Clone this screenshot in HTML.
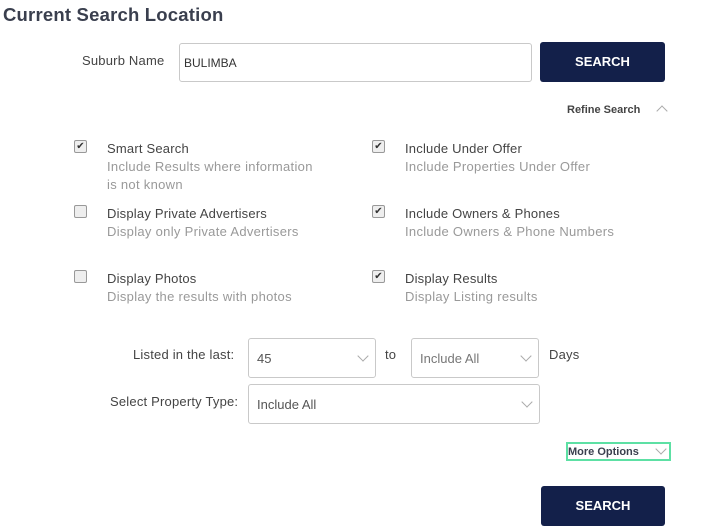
<!DOCTYPE html>
<html><head><style>
body{margin:0;width:702px;height:532px;background:#fff;font-family:"Liberation Sans",sans-serif;position:relative;overflow:hidden;color:#444}
.a{position:absolute;white-space:nowrap}
h1{position:absolute;left:3px;top:4px;margin:0;font-size:18.5px;font-weight:bold;color:#3a3f4e;letter-spacing:0.2px}
.btn{position:absolute;background:#13204a;color:#fff;font-weight:bold;font-size:13px;text-align:center;border-radius:3px}
.box{position:absolute;border:1px solid #c9c9c9;border-radius:3px;background:#fff;font-size:13px;color:#555}
.t{font-size:13px;color:#444;letter-spacing:0.2px}
.s{font-size:13px;color:#999;letter-spacing:0.3px}
.cb{position:absolute;width:11px;height:11px;border:1px solid #999;border-radius:2px;background:#eee;font-size:10px;line-height:11px;text-align:center;color:#333}
.chev{position:absolute;width:7px;height:7px;border-right:1px solid #aaa;border-bottom:1px solid #aaa;transform:rotate(45deg)}
</style></head><body>
<h1>Current Search Location</h1>
<div class="a t" style="left:82px;top:53px">Suburb Name</div>
<div class="box" style="left:179px;top:43px;width:351px;height:37px;"><span class="a" style="left:4px;top:12px;font-size:12px;color:#333">BULIMBA</span></div>
<div class="btn" style="left:540px;top:42px;width:125px;height:40px;line-height:40px">SEARCH</div>
<div class="a" style="left:567px;top:104px;font-size:11px;font-weight:bold;color:#444">Refine Search</div>
<div class="chev" style="left:658px;top:107px;transform:rotate(225deg)"></div>

<div class="cb" style="left:74px;top:140px">✔</div>
<div class="a t" style="left:107px;top:141px">Smart Search</div>
<div class="a s" style="left:107px;top:159px">Include Results where information</div>
<div class="a s" style="left:107px;top:177px">is not known</div>
<div class="cb" style="left:372px;top:140px">✔</div>
<div class="a t" style="left:405px;top:141px">Include Under Offer</div>
<div class="a s" style="left:405px;top:159px">Include Properties Under Offer</div>

<div class="cb" style="left:74px;top:205px"></div>
<div class="a t" style="left:107px;top:206px">Display Private Advertisers</div>
<div class="a s" style="left:107px;top:224px">Display only Private Advertisers</div>
<div class="cb" style="left:372px;top:205px">✔</div>
<div class="a t" style="left:405px;top:206px">Include Owners &amp; Phones</div>
<div class="a s" style="left:405px;top:224px">Include Owners &amp; Phone Numbers</div>

<div class="cb" style="left:74px;top:270px"></div>
<div class="a t" style="left:107px;top:271px">Display Photos</div>
<div class="a s" style="left:107px;top:289px">Display the results with photos</div>
<div class="cb" style="left:372px;top:270px">✔</div>
<div class="a t" style="left:405px;top:271px">Display Results</div>
<div class="a s" style="left:405px;top:289px">Display Listing results</div>

<div class="a t" style="left:133px;top:347px">Listed in the last:</div>
<div class="box" style="left:248px;top:338px;width:126px;height:38px"><span class="a" style="left:8px;top:12px">45</span><div class="chev" style="left:110px;top:13px"></div></div>
<div class="a t" style="left:385px;top:347px">to</div>
<div class="box" style="left:411px;top:338px;width:126px;height:38px"><span class="a" style="left:8px;top:12px;color:#777">Include All</span><div class="chev" style="left:110px;top:13px"></div></div>
<div class="a t" style="left:549px;top:347px">Days</div>
<div class="a t" style="left:110px;top:394px">Select Property Type:</div>
<div class="box" style="left:248px;top:384px;width:290px;height:38px"><span class="a" style="left:8px;top:12px">Include All</span><div class="chev" style="left:274px;top:13px"></div></div>

<div class="a" style="left:566px;top:442px;width:105px;height:19px;border:2px solid #5de0a4;box-sizing:border-box"></div>
<div class="a" style="left:568px;top:446px;font-size:11px;font-weight:bold;color:#3a3f4e">More Options</div>
<div class="chev" style="left:657px;top:445px"></div>
<div class="btn" style="left:541px;top:486px;width:124px;height:40px;line-height:40px">SEARCH</div>
</body></html>
